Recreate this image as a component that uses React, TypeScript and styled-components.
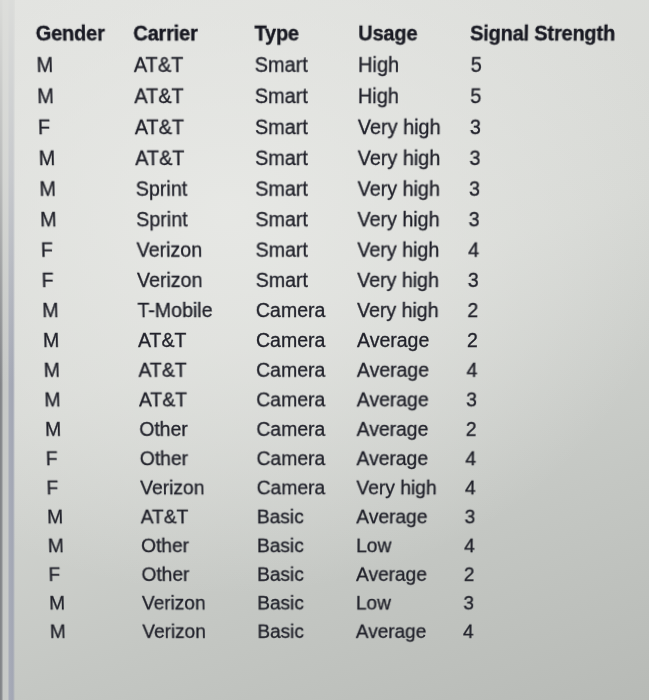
import styled, { createGlobalStyle } from 'styled-components';

const GlobalStyle = createGlobalStyle`
  html, body {
    margin: 0;
    padding: 0;
  }
  body {
    font-family: "Liberation Sans", Arial, sans-serif;
  }
`;

type Row = [string, string, string, string, number];

const headers = ['Gender', 'Carrier', 'Type', 'Usage', 'Signal Strength'];

const rows: Row[] = [
  ['M', 'AT&T', 'Smart', 'High', 5],
  ['M', 'AT&T', 'Smart', 'High', 5],
  ['F', 'AT&T', 'Smart', 'Very high', 3],
  ['M', 'AT&T', 'Smart', 'Very high', 3],
  ['M', 'Sprint', 'Smart', 'Very high', 3],
  ['M', 'Sprint', 'Smart', 'Very high', 3],
  ['F', 'Verizon', 'Smart', 'Very high', 4],
  ['F', 'Verizon', 'Smart', 'Very high', 3],
  ['M', 'T-Mobile', 'Camera', 'Very high', 2],
  ['M', 'AT&T', 'Camera', 'Average', 2],
  ['M', 'AT&T', 'Camera', 'Average', 4],
  ['M', 'AT&T', 'Camera', 'Average', 3],
  ['M', 'Other', 'Camera', 'Average', 2],
  ['F', 'Other', 'Camera', 'Average', 4],
  ['F', 'Verizon', 'Camera', 'Very high', 4],
  ['M', 'AT&T', 'Basic', 'Average', 3],
  ['M', 'Other', 'Basic', 'Low', 4],
  ['F', 'Other', 'Basic', 'Average', 2],
  ['M', 'Verizon', 'Basic', 'Low', 3],
  ['M', 'Verizon', 'Basic', 'Average', 4],
];

const App = () => {
  return (
    <>
      <GlobalStyle />
      <Screen>
        <Bezel />
        <Sheet>
          <Table>
            {headers.map((h) => (
              <HeadCell key={h}>{h}</HeadCell>
            ))}
            {rows.map((r, i) =>
              r.map((v, j) => (
                <Cell key={`${i}-${j}`} $num={j === 4}>
                  {v}
                </Cell>
              ))
            )}
          </Table>
        </Sheet>
      </Screen>
    </>
  );
};

const Screen = styled.div`
  width: 649px;
  height: 700px;
  display: flex;
  overflow: hidden;
  background:
    radial-gradient(ellipse 70% 55% at 35% 30%, rgba(232, 233, 230, 0.9) 0%, rgba(232, 233, 230, 0) 100%),
    linear-gradient(160deg, #e1e2df 0%, #d6d8d4 45%, #c4c7c3 75%, #b7bab6 100%);
`;

const Bezel = styled.div`
  width: 15px;
  flex-shrink: 0;
  background:
    linear-gradient(to bottom, rgba(222, 223, 220, 0.95) 0%, rgba(222, 223, 220, 0.6) 25%, rgba(222, 223, 220, 0) 55%),
    linear-gradient(
      to right,
      #7d7f83 0px,
      #8f9194 2px,
      #c6c8c6 3px,
      #c8cac8 8px,
      #a7abb8 9px,
      #a3a7b4 13px,
      rgba(200, 202, 200, 0) 15px
    );
`;

const Sheet = styled.div`
  flex: 1;
  padding: 25px 0 0 28px;
`;

const Table = styled.div`
  display: grid;
  grid-template-columns: 95px 118px 101px 109px auto;
  grid-auto-rows: 30px;
  width: 538px;
  color: #1f2026;
  font-size: 19.5px;
  transform-origin: 269px 315px;
  transform: perspective(1000px) rotateX(-5deg);
  filter: blur(0.3px);
`;

const HeadCell = styled.div`
  font-weight: 700;
  line-height: 30px;
  white-space: nowrap;
  color: #181922;
  letter-spacing: -0.2px;
  -webkit-text-stroke: 0.35px #181922;
`;

const Cell = styled.div<{ $num?: boolean }>`
  line-height: 30px;
  white-space: nowrap;
  color: #20212a;
  -webkit-text-stroke: 0.3px #20212a;
  padding-left: ${(p) => (p.$num ? '1px' : '0')};
`;

export default App;
